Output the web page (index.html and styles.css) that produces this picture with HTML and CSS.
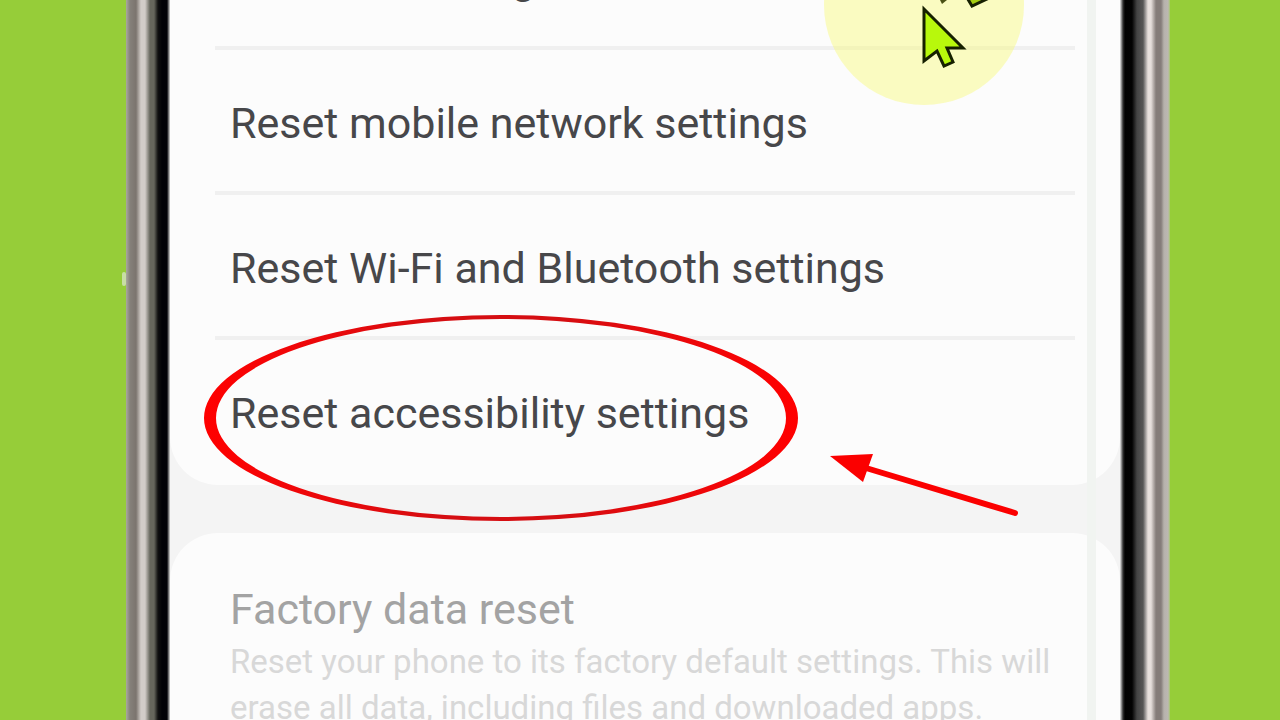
FILE: index.html
```html
<!DOCTYPE html>
<html lang="en">
<head>
<meta charset="utf-8">
<meta name="viewport" content="width=device-width, initial-scale=1">
<title>Reset settings</title>
<link rel="stylesheet" href="styles.css">
</head>
<body>
<main class="phone">
  <div class="bezel bezel-left"></div>
  <div class="screen">
    <section class="card card-reset">
      <button class="row" type="button">Reset all settings</button>
      <button class="row" type="button">Reset mobile network settings</button>
      <button class="row" type="button">Reset Wi-Fi and Bluetooth settings</button>
      <button class="row" type="button">Reset accessibility settings</button>
    </section>
    <section class="card card-factory">
      <h2 class="title">Factory data reset</h2>
      <p class="note">Reset your phone to its factory default settings. This will<br>erase all data, including files and downloaded apps.</p>
    </section>
    <div class="edge-line"></div>
  </div>
  <div class="bezel bezel-right"></div>
  <span class="side-key"></span>
</main>
<svg class="marks" viewBox="0 0 1280 720" aria-hidden="true">
  <defs>
    <linearGradient id="ring" x1="0" x2="1" y1="0" y2="0">
      <stop offset="0" stop-color="#ff0000"/>
      <stop offset="0.12" stop-color="#f30507"/>
      <stop offset="0.4" stop-color="#d50e12"/>
      <stop offset="0.6" stop-color="#d50e12"/>
      <stop offset="0.88" stop-color="#f30507"/>
      <stop offset="1" stop-color="#ff0000"/>
    </linearGradient>
  </defs>
  <circle cx="924" cy="5" r="100" fill="#f8fa60" fill-opacity="0.38"/>
  <g fill="#b8f80c" stroke="#162000" stroke-width="3" stroke-linejoin="miter">
    <path d="M924 9V61L937 51L944 66L953 62L947 48H963Z"/>
    <path d="M966 -4L972 6L987 -1L984 -8Z" fill="#a4cc12"/>
  </g>
  <path d="M940 0L942 4L947 0Z" fill="#4a5114"/>
  <path fill="url(#ring)" fill-rule="evenodd" d="M204 418A297 103 0 0 1 798 418A297 103 0 0 1 204 418ZM216 418A285 99 0 0 1 786 418A285 99 0 0 1 216 418Z"/>
  <path d="M866 468L1015 513" stroke="#fb0000" stroke-width="6" stroke-linecap="round"/>
  <path d="M830 456L873 454L863 482Z" fill="#fb0000"/>
</svg>
</body>
</html>
```
FILE: styles.css
```css
* {
  box-sizing: border-box;
}

body {
  margin: 0;
  min-height: 100vh;
  overflow: hidden;
  background: #96cd39;
  font-family: Roboto, "Liberation Sans", sans-serif;
}

.phone {
  position: relative;
  display: flex;
  height: 100vh;
  margin: 0 110px 0 126px;
}

.bezel {
  flex: none;
}

.bezel-left {
  width: 44px;
  background: linear-gradient(to right,
    #aaa99d 0, #85807a 4px, #7b746e 10px, #d2ccc8 15px, #d2ccc8 19px,
    #66665c 24px, #66665c 28px, #101010 32px, #000006 36px, #000006 41px, #d8d8d8 44px);
}

.bezel-right {
  width: 50px;
  background: linear-gradient(to right,
    #e8e8e8 0, #303030 3px, #000000 5px, #020202 12px, #444444 17px, #555555 23px,
    #e6dfdc 28px, #e6dfdc 31px, #857d7a 36px, #857d7a 41px, #b6b2ac 44px, #bcb8b2 48px, #a8c86c 50px);
}

.side-key {
  position: absolute;
  left: -4px;
  top: 272px;
  width: 4px;
  height: 14px;
  border-radius: 2px;
  background: #c8dea4;
}

.screen {
  position: relative;
  flex: 1;
  min-width: 0;
  overflow: hidden;
  background: #f4f4f4;
}

.card {
  padding: 0 45px;
  background: #fcfcfc;
}

.card-reset {
  margin-top: -95px;
  border-radius: 0 0 48px 48px;
}

.row {
  display: block;
  width: 100%;
  height: 145px;
  padding: 5px 0 0 15px;
  border: 0;
  border-bottom: 4px solid #f0f0f0;
  background: transparent;
  color: #47474a;
  font-family: inherit;
  font-size: 43px;
  line-height: 48px;
  text-align: left;
  white-space: nowrap;
}

.row:last-child {
  border-bottom-color: transparent;
}

.card-factory {
  margin-top: 48px;
  padding: 50px 60px 40px;
  border-radius: 48px 48px 0 0;
}

.title {
  margin: 0;
  color: #a3a3a3;
  font-size: 43px;
  font-weight: 400;
  line-height: 52px;
}

.note {
  margin: 4px 0 0;
  color: #d8d8d8;
  font-size: 33px;
  line-height: 46px;
  white-space: nowrap;
}

.edge-line {
  position: absolute;
  top: 0;
  bottom: 0;
  right: 24px;
  width: 9px;
  background: #f1f4f1;
}

.marks {
  position: absolute;
  left: 0;
  top: 0;
  width: 100%;
  pointer-events: none;
}
```
